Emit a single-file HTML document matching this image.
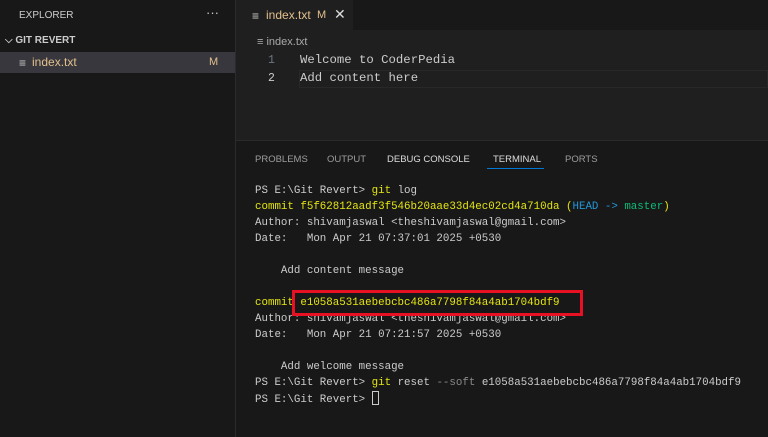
<!DOCTYPE html>
<html><head><style>
*{margin:0;padding:0;box-sizing:border-box}
body{width:768px;height:437px;background:#181818;font-family:"Liberation Sans",sans-serif;position:relative;overflow:hidden;color:#ccc}
.abs{position:absolute;white-space:pre}
.mono{font-family:"Liberation Mono",monospace;font-size:10.8px}
.y{color:#e5e510}.b{color:#2496d6}.g{color:#0dbc79}.gr{color:#8a8a8a}
</style></head><body>
<div class="abs" style="left:235px;top:0;width:1px;height:437px;background:#2b2b2b"></div>
<div class="abs" style="left:19px;top:10px;font-size:10px;color:#ccc">EXPLORER</div>
<div class="abs" style="left:206px;top:5px;font-size:13px;color:#ccc">···</div>
<div class="abs" style="left:5px;top:35px;font-size:10px;font-weight:bold;color:#ccc">⌵ GIT REVERT</div>
<div class="abs" style="left:0;top:52px;width:235px;height:21px;background:#37373d"></div>
<div class="abs" style="left:19px;top:56px;font-size:12px;color:#ccc">≡</div>
<div class="abs" style="left:32px;top:55px;font-size:12px;color:#e2c08d">index.txt</div>
<div class="abs" style="left:209px;top:56px;font-size:11px;color:#e2c08d">M</div>
<div class="abs" style="left:236px;top:30px;width:532px;height:407px;background:#1f1f1f"></div>
<div class="abs" style="left:236px;top:0;width:117px;height:31px;background:#1f1f1f"></div>
<div class="abs" style="left:252px;top:9px;font-size:12px;color:#ccc">≡</div>
<div class="abs" style="left:266px;top:8px;font-size:12px;color:#e2c08d">index.txt</div>
<div class="abs" style="left:317px;top:9px;font-size:11px;color:#e2c08d">M</div>
<div class="abs" style="left:334px;top:6px;font-size:14px;color:#ddd">✕</div>
<div class="abs" style="left:257px;top:36px;font-size:11px;color:#aaa">≡ index.txt</div>
<div class="abs mono" style="left:268px;top:54px;font-size:11.5px;color:#6e7681">1</div>
<div class="abs mono" style="left:268px;top:72px;font-size:11.5px;color:#ccc">2</div>
<div class="abs" style="left:299px;top:70px;width:469px;height:18px;border:1px solid #282828"></div>
<div class="abs mono" style="left:300px;top:53px;font-size:12.3px;color:#ccc">Welcome to CoderPedia</div>
<div class="abs mono" style="left:300px;top:71px;font-size:12.3px;color:#ccc">Add content here</div>
<div class="abs" style="left:236px;top:140px;width:532px;height:1px;background:#2b2b2b"></div>
<div class="abs" style="left:236px;top:141px;width:532px;height:296px;background:#181818"></div>
<div class="abs" style="left:255px;top:154px;font-size:9.5px;color:#9d9d9d">PROBLEMS</div>
<div class="abs" style="left:327px;top:154px;font-size:9.5px;color:#9d9d9d">OUTPUT</div>
<div class="abs" style="left:387px;top:154px;font-size:9.5px;color:#ddd">DEBUG CONSOLE</div>
<div class="abs" style="left:493px;top:154px;font-size:9.5px;color:#ddd">TERMINAL</div>
<div class="abs" style="left:487px;top:168px;width:57px;height:1px;background:#0078d4"></div>
<div class="abs" style="left:565px;top:154px;font-size:9.5px;color:#9d9d9d">PORTS</div>
<div class="abs mono" style="left:255px;top:183px;line-height:16px;color:#ccc">PS E:\Git Revert&gt; <span class="y">git</span> log
<span class="y">commit f5f62812aadf3f546b20aae33d4ec02cd4a710da (<span class="b">HEAD -&gt; </span><span class="g">master</span>)</span>
Author: shivamjaswal &lt;theshivamjaswal@gmail.com&gt;
Date:   Mon Apr 21 07:37:01 2025 +0530

    Add content message

<span class="y">commit e1058a531aebebcbc486a7798f84a4ab1704bdf9</span>
Author: shivamjaswal &lt;theshivamjaswal@gmail.com&gt;
Date:   Mon Apr 21 07:21:57 2025 +0530

    Add welcome message
PS E:\Git Revert&gt; <span class="y">git</span> reset <span class="gr">--soft</span> e1058a531aebebcbc486a7798f84a4ab1704bdf9
PS E:\Git Revert&gt; <span style="display:inline-block;width:7px;height:14px;border:1px solid #ccc;vertical-align:-3px"></span></div>
<div class="abs" style="left:292px;top:290px;width:291px;height:26px;border:3px solid #e81123"></div>
</body></html>
